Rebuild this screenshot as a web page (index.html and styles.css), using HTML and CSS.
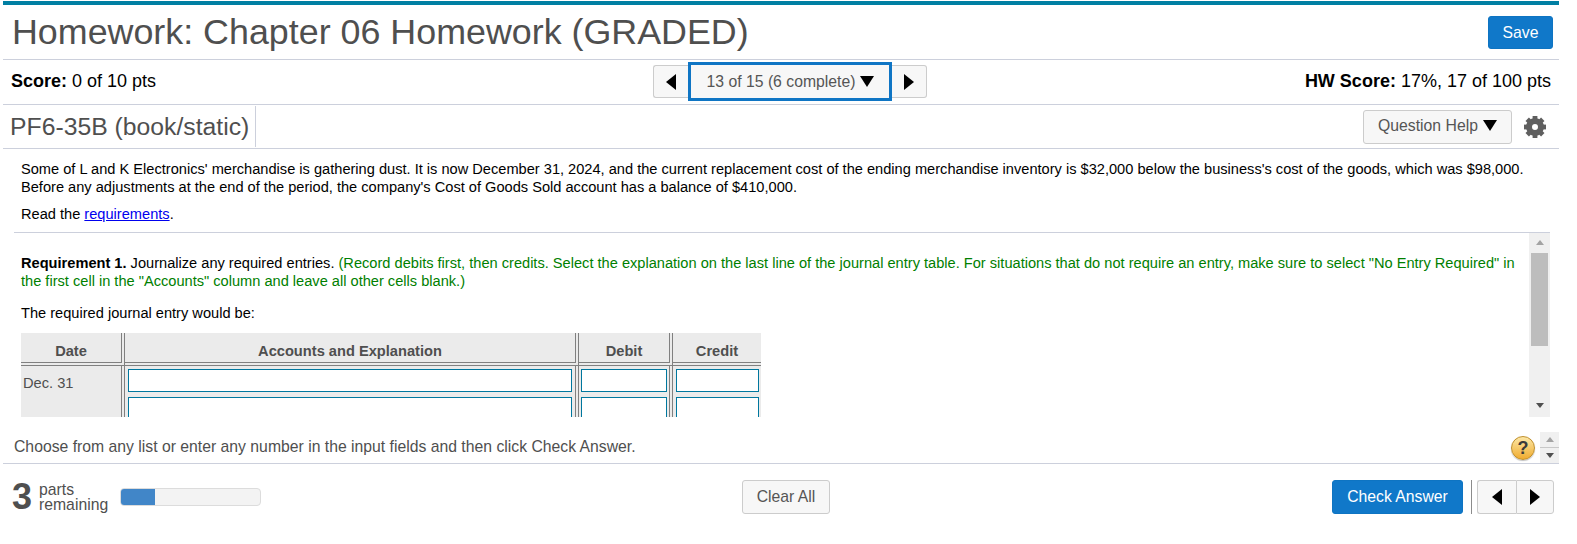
FILE: index.html
```html
<!DOCTYPE html>
<html lang="en">
<head>
<meta charset="utf-8">
<title>Homework: Chapter 06 Homework (GRADED)</title>
<link rel="stylesheet" href="styles.css">
</head>
<body>
<div class="app">
  <header class="title-row">
    <h1 class="title">Homework: Chapter 06 Homework (GRADED)</h1>
    <button class="btn btn-primary btn-save">Save</button>
  </header>
  <div class="score-row">
    <div class="score score-left"><b>Score:</b> 0 of 10 pts</div>
    <div class="pager">
      <button class="pager-arrow"><span class="tri tri-left"></span></button>
      <button class="pager-current">13 of 15 (6 complete)<span class="tri tri-down"></span></button>
      <button class="pager-arrow"><span class="tri tri-right"></span></button>
    </div>
    <div class="score score-right"><b>HW Score:</b> 17%, 17 of 100 pts</div>
  </div>
  <div class="question-row">
    <h2 class="question-name">PF6-35B (book/static)</h2>
    <div class="question-tools">
      <button class="btn btn-help">Question Help<span class="tri tri-down"></span></button>
      <svg class="gear" viewBox="-12 -12 24 24" width="24" height="24" aria-hidden="true">
        <circle class="gear-ring" r="6"/>
        <g class="gear-teeth">
          <rect x="-2.4" y="-11" width="4.8" height="5"/>
          <rect x="-2.4" y="-11" width="4.8" height="5" transform="rotate(45)"/>
          <rect x="-2.4" y="-11" width="4.8" height="5" transform="rotate(90)"/>
          <rect x="-2.4" y="-11" width="4.8" height="5" transform="rotate(135)"/>
          <rect x="-2.4" y="-11" width="4.8" height="5" transform="rotate(180)"/>
          <rect x="-2.4" y="-11" width="4.8" height="5" transform="rotate(225)"/>
          <rect x="-2.4" y="-11" width="4.8" height="5" transform="rotate(270)"/>
          <rect x="-2.4" y="-11" width="4.8" height="5" transform="rotate(315)"/>
        </g>
      </svg>
    </div>
  </div>
  <section class="statement">
    <p class="para">Some of L and K Electronics' merchandise is gathering dust. It is now December 31, 2024, and the current replacement cost of the ending merchandise inventory is $32,000 below the business's cost of the goods, which was $98,000. Before any adjustments at the end of the period, the company's Cost of Goods Sold account has a balance of $410,000.</p>
    <p class="para para-read">Read the <a href="#" class="link">requirements</a>.</p>
  </section>
  <section class="pane">
    <div class="pane-content">
      <p class="para"><b>Requirement 1.</b> Journalize any required entries. <span class="hint-green">(Record debits first, then credits. Select the explanation on the last line of the journal entry table. For situations that do not require an entry, make sure to select "No Entry Required" in the first cell in the "Accounts" column and leave all other cells blank.)</span></p>
      <p class="para para-req">The required journal entry would be:</p>
      <table class="journal">
        <thead>
          <tr>
            <th class="col-date">Date</th>
            <th class="col-acct">Accounts and Explanation</th>
            <th class="col-debit">Debit</th>
            <th class="col-credit">Credit</th>
          </tr>
        </thead>
        <tbody>
          <tr>
            <td class="date-cell">Dec. 31</td>
            <td class="col-acct"><input class="cell-input" type="text"></td>
            <td class="col-debit"><input class="cell-input" type="text"></td>
            <td class="col-credit"><input class="cell-input" type="text"></td>
          </tr>
          <tr>
            <td class="date-cell"></td>
            <td class="col-acct"><input class="cell-input" type="text"></td>
            <td class="col-debit"><input class="cell-input" type="text"></td>
            <td class="col-credit"><input class="cell-input" type="text"></td>
          </tr>
        </tbody>
      </table>
    </div>
    <div class="scrollbar">
      <span class="sb-arrow sb-up"></span>
      <span class="sb-thumb"></span>
      <span class="sb-spacer"></span>
      <span class="sb-arrow sb-down"></span>
    </div>
  </section>
  <div class="hint-row">
    <span class="hint-text">Choose from any list or enter any number in the input fields and then click Check Answer.</span>
    <div class="hint-tools">
      <span class="help-badge">?</span>
      <div class="spinner">
        <span class="spin-half"><span class="sb-arrow sb-up"></span></span>
        <span class="spin-half spin-lower"><span class="sb-arrow sb-down"></span></span>
      </div>
    </div>
  </div>
  <footer class="footer">
    <div class="parts">
      <span class="parts-num">3</span>
      <span class="parts-label">parts<br>remaining</span>
      <span class="progress"><span class="progress-fill"></span></span>
    </div>
    <button class="btn btn-clear">Clear All</button>
    <div class="actions">
      <button class="btn btn-primary btn-check">Check Answer</button>
      <span class="divider"></span>
      <div class="mini-pager">
        <button class="mini-arrow"><span class="tri tri-left"></span></button>
        <button class="mini-arrow"><span class="tri tri-right"></span></button>
      </div>
    </div>
  </footer>
</div>
</body>
</html>
```
FILE: styles.css
```css
* { box-sizing: border-box; }
html, body { margin: 0; padding: 0; background: #fff; }
body {
  font-family: "Liberation Sans", Arial, sans-serif;
  font-size: 14px;
  color: #000;
  padding: 1px 0 0 3px;
}
.app { width: 1556px; }
button { font-family: inherit; cursor: pointer; }

.title-row {
  height: 59px;
  border-top: 4px solid #007fa3;
  border-bottom: 1px solid #ccd0dc;
  display: flex;
  align-items: center;
  justify-content: space-between;
  padding: 0 6px 0 9px;
}
.title { margin: 0; font-size: 35.85px; font-weight: normal; color: #4f4f4f; line-height: 50px; }

.btn { border-radius: 3px; font-size: 15.75px; height: 34px; padding: 0; }
.btn-primary { background: #1078c9; border: 1px solid #0e74c2; color: #fff; }
.btn-save { width: 65px; height: 33px; margin-top: 1px; }

.score-row {
  height: 45px;
  border-bottom: 1px solid #ccd0dc;
  display: flex;
  align-items: center;
  justify-content: space-between;
  padding: 0 8px 1px 8px;
}
.score { font-size: 18px; }
.score-left { width: 318px; }
.score-right { width: 300px; text-align: right; }

.pager { display: flex; align-items: center; height: 33px; }
.pager-arrow {
  width: 35px; height: 33px;
  background: #f7f7f7;
  border: 1px solid #ccc;
  display: flex; align-items: center; justify-content: center;
  padding: 0;
}
.pager-arrow:first-child { border-radius: 3px 0 0 3px; border-right: 0; }
.pager-arrow:last-child { border-radius: 0 3px 3px 0; border-left: 0; }
.pager-current {
  width: 204px; height: 39px;
  background: #f7f7f7;
  border: 3px solid #0f75c4;
  color: #555;
  font-size: 15.75px;
  display: flex; align-items: center; justify-content: center;
  padding: 0 0 0 1px;
}

.tri { display: inline-block; width: 0; height: 0; }
.tri-left { border-top: 8px solid transparent; border-bottom: 8px solid transparent; border-right: 10px solid #000; }
.tri-right { border-top: 8px solid transparent; border-bottom: 8px solid transparent; border-left: 10px solid #000; }
.tri-down { border-left: 7.5px solid transparent; border-right: 7.5px solid transparent; border-top: 11px solid #000; margin-left: 5px; }

.question-row {
  height: 44px;
  border-bottom: 1px solid #ccd0dc;
  display: flex;
  align-items: center;
  justify-content: space-between;
  padding: 0 12px 0 7px;
}
.question-name {
  margin: 0;
  font-size: 24.75px;
  font-weight: normal;
  color: #4f4f4f;
  height: 41px;
  line-height: 41px;
  width: 246px;
  white-space: nowrap;
  border-right: 1px solid #ccd0dc;
}
.question-tools { display: flex; align-items: center; gap: 11px; }
.btn-help {
  width: 149px;
  background: #f7f7f7;
  border: 1px solid #ccc;
  color: #555;
  display: flex; align-items: center; justify-content: center;
  padding-bottom: 2px;
}
.gear { display: block; }
.gear-ring { fill: none; stroke: #5f5f5f; stroke-width: 6; }
.gear-teeth { fill: #5f5f5f; }

.statement { padding: 11px 9px 0 18px; height: 83px; }
.para { margin: 0; line-height: 18px; font-size: 14.62px; }
.para-read { margin-top: 9px; }
.link { color: #00e; }

.pane {
  height: 185px;
  margin-left: 11px;
  width: 1536px;
  border-top: 1px solid #ccd0dc;
  display: flex;
  overflow: hidden;
}
.pane-content { width: 1515px; padding: 21px 0 0 7px; }
.hint-green { color: #008000; }
.para-req { margin-top: 14px; }

.journal {
  border-collapse: separate;
  border-spacing: 0;
  margin-top: 11px;
  width: 740px;
  table-layout: fixed;
  background: #ebebeb;
}
.journal th {
  height: 33px;
  padding: 8px 0 1px;
  font-size: 14.65px;
  color: #4f4f4f;
  border-bottom: 4px double #808080;
  line-height: 20px;
}
.journal td { padding: 0; height: 28px; vertical-align: top; text-align: center; }
.col-date, .date-cell { width: 104px; border-right: 4px double #808080; }
.col-acct { width: 454px; border-right: 4px double #808080; }
.col-debit { width: 94px; border-right: 4px double #808080; }
.col-credit { width: 88px; }
.journal td.date-cell { text-align: left; color: #4f4f4f; padding: 8px 0 0 2px; font-size: 14.65px; line-height: 18px; }
.cell-input {
  display: block;
  height: 23px;
  width: calc(100% - 6px);
  margin: 3px 0 0 3px;
  border: 1px solid #00779e;
  background: #fff;
  padding: 0;
  border-radius: 0;
  outline: 0;
}
.col-debit .cell-input { width: calc(100% - 4px); margin-left: 2px; }
.col-credit .cell-input { width: calc(100% - 5px); }

.scrollbar {
  width: 21px;
  background: #f0f0f0;
  display: flex;
  flex-direction: column;
  align-items: center;
  padding: 7px 0 0;
}
.sb-arrow { display: block; width: 0; height: 0; }
.sb-up { border-left: 4.5px solid transparent; border-right: 4.5px solid transparent; border-bottom: 5px solid #a3a3a3; }
.sb-down { border-left: 4.5px solid transparent; border-right: 4.5px solid transparent; border-top: 5px solid #505050; }
.sb-thumb { width: 17px; height: 93px; background: #bdbdbd; margin-top: 8px; }
.sb-spacer { flex: 1; }
.scrollbar .sb-down { margin-bottom: 9px; }

.hint-row {
  height: 47px;
  border-bottom: 1px solid #ccd0dc;
  display: flex;
  align-items: flex-end;
  justify-content: space-between;
  padding: 0 0 0 11px;
}
.hint-text { font-size: 15.75px; line-height: 18px; color: #4f4f4f; margin-bottom: 7px; }
.hint-tools { display: flex; align-items: flex-end; gap: 5px; }
.help-badge {
  width: 24px; height: 24px;
  margin-bottom: 3px;
  border-radius: 50%;
  background: linear-gradient(#fce7a6, #f0ac30);
  border: 1px solid #c08f2c;
  box-shadow: 0 1px 1px rgba(0, 0, 0, 0.25);
  color: #3a3a3a;
  font-weight: bold;
  font-size: 18px;
  line-height: 22px;
  text-align: center;
}
.spinner { width: 19px; height: 31px; background: #f0f0f0; display: flex; flex-direction: column; }
.spin-half { flex: 1; display: flex; align-items: center; justify-content: center; }
.spin-lower { border-top: 1px solid #c8c8c8; }

.footer {
  height: 52px;
  padding: 16px 5px 0 9px;
  display: flex;
  align-items: flex-start;
  justify-content: space-between;
}
.parts { display: flex; align-items: center; height: 34px; width: 270px; }
.parts-num { font-size: 36px; font-weight: bold; color: #4f4f4f; width: 27px; line-height: 34px; }
.parts-label { font-size: 15.75px; line-height: 15px; color: #4f4f4f; width: 81px; }
.progress {
  display: block;
  width: 141px; height: 18px;
  background: #f3f3f3;
  border: 1px solid #dcdcdc;
  border-radius: 4px;
  overflow: hidden;
}
.progress-fill { display: block; width: 25%; height: 100%; background: #4186c8; margin: -1px 0 0 -1px; padding-bottom: 2px; box-sizing: content-box; }
.btn-clear { width: 88px; background: #f7f7f7; border: 1px solid #ccc; color: #555; margin-right: 42px; }
.actions { display: flex; align-items: center; width: 222px; }
.btn-check { width: 131px; }
.divider { width: 1px; height: 34px; background: #8c8c8c; margin: 0 5px 0 8px; }
.mini-pager { display: flex; }
.mini-arrow {
  width: 38px; height: 34px;
  background: #f7f7f7;
  border: 1px solid #ccc;
  display: flex; align-items: center; justify-content: center;
  padding: 0;
}
.mini-arrow:first-child { width: 39px; border-radius: 3px 0 0 3px; border-right: 0; }
.mini-arrow:last-child { border-radius: 0 3px 3px 0; }
```
